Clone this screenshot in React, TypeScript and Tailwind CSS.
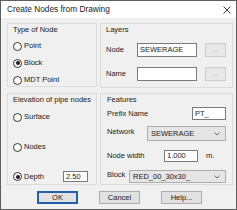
import React from "react";

const Radio: React.FC<{ label: string; checked?: boolean }> = ({ label, checked }) => (
  <div className="flex items-center gap-[2px]">
    <span className="flex h-[9px] w-[9px] items-center justify-center rounded-full border border-[#333333] bg-white">
      {checked && <span className="h-[4px] w-[4px] rounded-full bg-[#1a1a1a]" />}
    </span>
    <span>{label}</span>
  </div>
);

const TextBox: React.FC<{ value?: string; className?: string }> = ({ value = "", className = "" }) => (
  <div className={`flex items-center border border-[#7a7a7a] bg-white pl-[2px] ${className}`}>
    {value}
  </div>
);

const Select: React.FC<{ value: string; className?: string }> = ({ value, className = "" }) => (
  <div className={`flex items-center justify-between border border-[#adadad] bg-[#e5e5e5] pl-[3px] pr-[5px] ${className}`}>
    <span>{value}</span>
    <svg width="6" height="4" viewBox="0 0 6 4">
      <path d="M0.5 0.5 L3 3 L5.5 0.5" fill="none" stroke="#555555" strokeWidth="0.9" />
    </svg>
  </div>
);

const Browse: React.FC = () => (
  <div className="flex h-[14px] w-[21px] items-center justify-center border border-[#cccccc] bg-[#e8e8e8] text-[#a8a8a8]">
    ...
  </div>
);

const Button: React.FC<{ label: string; primary?: boolean }> = ({ label, primary }) => (
  <div
    className={`flex h-[13px] w-[41px] items-center justify-center bg-[#e1e1e1] ${
      primary ? "border-2 border-[#1f62a8]" : "border border-[#adadad]"
    }`}
  >
    {label}
  </div>
);

const App: React.FC = () => {
  return (
    <div
      className="flex h-[210px] w-[237px] flex-col whitespace-nowrap border border-[#5e5e5e] bg-[#f0f0f0] text-[7.5px] leading-none text-[#1a1a1a]"
      style={{ fontFamily: '"Liberation Sans", Arial, sans-serif' }}
    >
      {/* Title bar */}
      <div className="flex h-[17px] items-center justify-between bg-white pl-[6px] pr-[5px]">
        <span className="text-[8.3px]">Create Nodes from Drawing</span>
        <svg width="8" height="8" viewBox="0 0 8 8">
          <path d="M0.5 0.5 L7.5 7.5 M7.5 0.5 L0.5 7.5" stroke="#222222" strokeWidth="0.9" />
        </svg>
      </div>

      {/* Body */}
      <div className="flex gap-[3px] pl-[6px] pr-[3px] pt-[5px]">
        {/* Left column */}
        <div className="flex w-[90px] flex-col gap-[6px]">
          <div className="flex h-[64px] flex-col border border-[#dcdcdc] pl-[5px]">
            <div className="flex h-[11px] items-center">Type of Node</div>
            <div className="mt-[6px] flex h-[10px] items-center">
              <Radio label="Point" />
            </div>
            <div className="mt-[7px] flex h-[10px] items-center">
              <Radio label="Block" checked />
            </div>
            <div className="mt-[7px] flex h-[10px] items-center">
              <Radio label="MDT Point" />
            </div>
          </div>

          <div className="flex h-[92px] flex-col border border-[#dcdcdc] pl-[5px]">
            <div className="flex h-[11px] items-center">Elevation of pipe nodes</div>
            <div className="mt-[7px] flex h-[10px] items-center">
              <Radio label="Surface" />
            </div>
            <div className="mt-[20px] flex h-[10px] items-center">
              <Radio label="Nodes" />
            </div>
            <div className="mt-[19px] flex h-[11px] items-center justify-between pr-[8px]">
              <Radio label="Depth" checked />
              <TextBox value="2.50" className="h-[11px] w-[25px]" />
            </div>
          </div>
        </div>

        {/* Right column */}
        <div className="flex w-[133px] flex-col gap-[5px]">
          <div className="flex h-[65px] flex-col border border-[#dcdcdc] pl-[5px] pr-[6px]">
            <div className="flex h-[11px] items-center">Layers</div>
            <div className="mt-[8px] flex h-[14px] items-center">
              <span className="w-[31px]">Node</span>
              <TextBox value="SEWERAGE" className="h-[14px] w-[60px]" />
              <span className="ml-auto">
                <Browse />
              </span>
            </div>
            <div className="mt-[10px] flex h-[14px] items-center">
              <span className="w-[31px]">Name</span>
              <TextBox className="h-[14px] w-[60px]" />
              <span className="ml-auto">
                <Browse />
              </span>
            </div>
          </div>

          <div className="flex h-[92px] flex-col border border-[#dcdcdc] pl-[6px] pr-[6px]">
            <div className="flex h-[11px] items-center">Features</div>
            <div className="mt-[2px] flex h-[13px] items-center justify-between">
              <span>Prefix Name</span>
              <TextBox value="PT_" className="h-[13px] w-[34px]" />
            </div>
            <div className="mt-[6px] flex h-[15px] items-center justify-between">
              <span className="mb-[4px]">Network</span>
              <Select value="SEWERAGE" className="h-[15px] w-[79px]" />
            </div>
            <div className="mt-[9px] flex h-[12px] items-center">
              <span>Node width</span>
              <TextBox value="1.000" className="ml-auto h-[12px] w-[34px]" />
              <span className="w-[28px] pl-[8px]">m.</span>
            </div>
            <div className="mt-[8px] flex h-[13px] items-center justify-between">
              <span className="mb-[3px]">Block</span>
              <Select value="RED_00_30x30_" className="h-[13px] w-[97px]" />
            </div>
          </div>
        </div>
      </div>

      {/* Buttons */}
      <div className="mt-[6px] flex gap-[21px] pl-[36px]">
        <Button label="OK" primary />
        <Button label="Cancel" />
        <Button label="Help..." />
      </div>
    </div>
  );
};

export default App;
